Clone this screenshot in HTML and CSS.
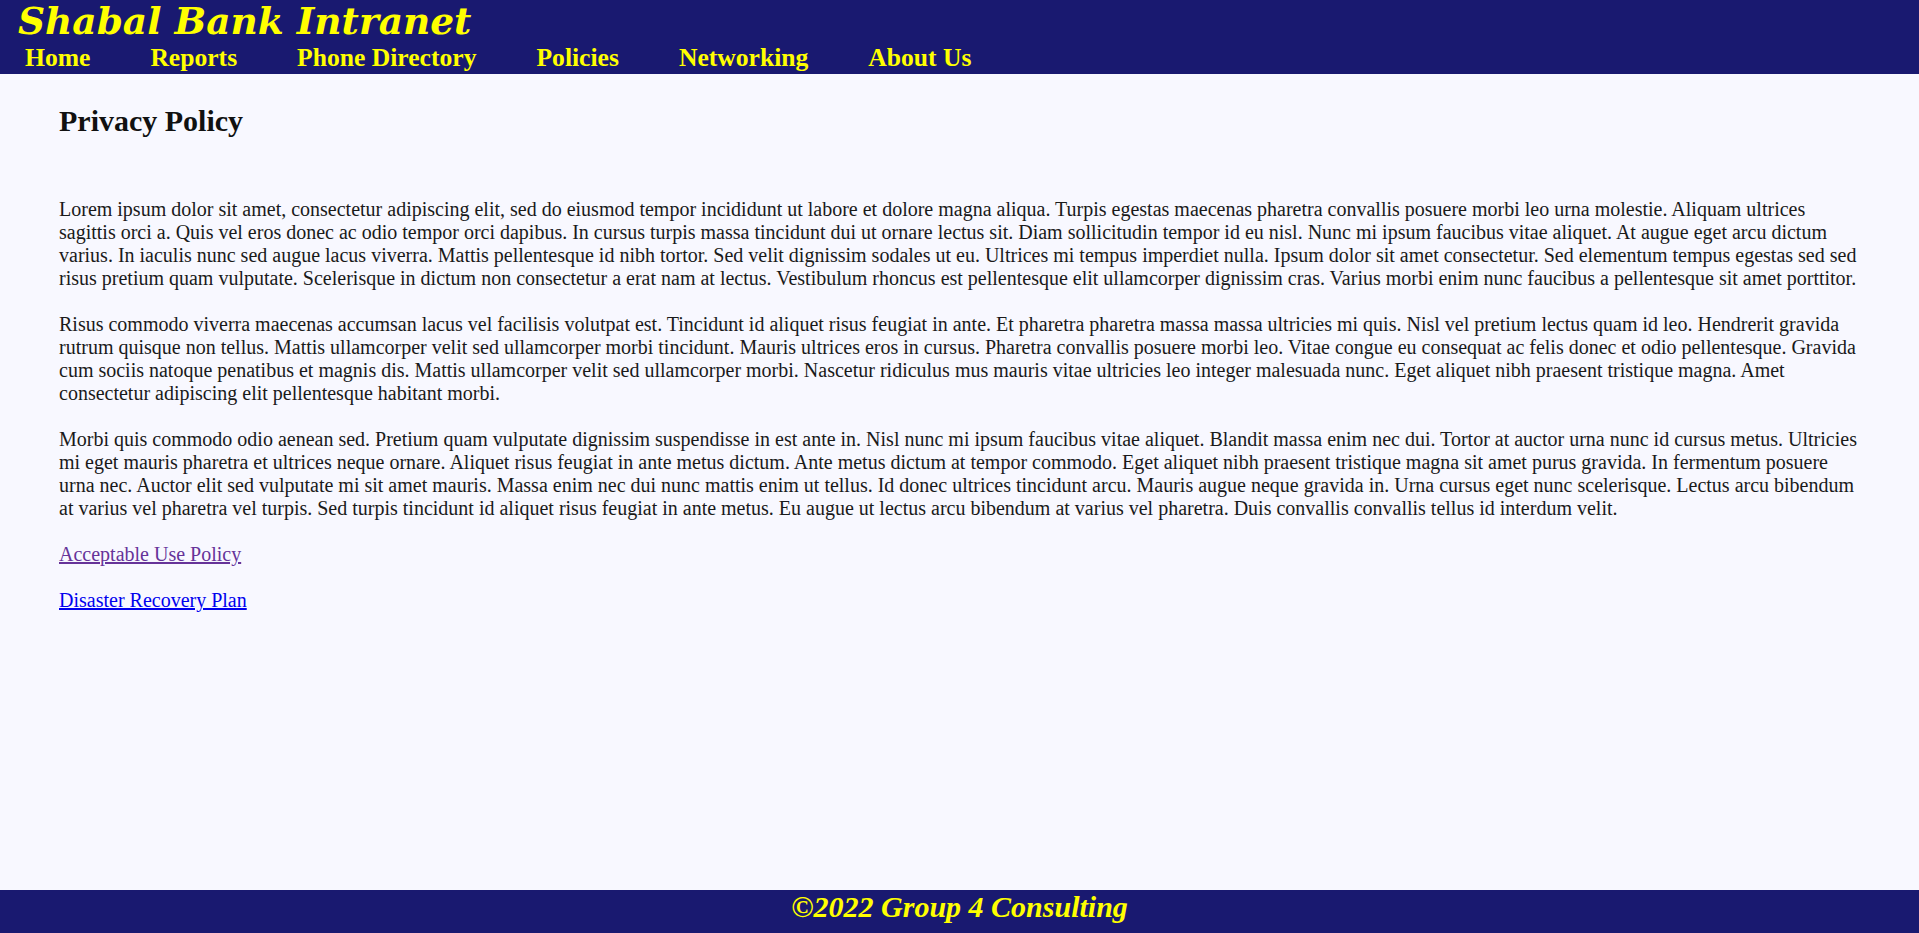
FILE: index.html
```html
<!DOCTYPE html>
<html lang="en">
<head>
<meta charset="utf-8">
<title>Shabal Bank Intranet - Privacy Policy</title>
<link rel="stylesheet" href="styles.css">
</head>
<body>
<div class="page">
  <header class="site-header">
    <div class="site-title">Shabal Bank Intranet</div>
    <nav class="site-nav">
      <a href="#">Home</a>
      <a href="#">Reports</a>
      <a href="#">Phone Directory</a>
      <a href="#">Policies</a>
      <a href="#">Networking</a>
      <a href="#">About Us</a>
    </nav>
  </header>
  <main class="content">
    <h1 class="page-title">Privacy Policy</h1>
    <p class="para">Lorem ipsum dolor sit amet, consectetur adipiscing elit, sed do eiusmod tempor incididunt ut labore et dolore magna aliqua. Turpis egestas maecenas pharetra convallis posuere morbi leo urna molestie. Aliquam ultrices sagittis orci a. Quis vel eros donec ac odio tempor orci dapibus. In cursus turpis massa tincidunt dui ut ornare lectus sit. Diam sollicitudin tempor id eu nisl. Nunc mi ipsum faucibus vitae aliquet. At augue eget arcu dictum varius. In iaculis nunc sed augue lacus viverra. Mattis pellentesque id nibh tortor. Sed velit dignissim sodales ut eu. Ultrices mi tempus imperdiet nulla. Ipsum dolor sit amet consectetur. Sed elementum tempus egestas sed sed risus pretium quam vulputate. Scelerisque in dictum non consectetur a erat nam at lectus. Vestibulum rhoncus est pellentesque elit ullamcorper dignissim cras. Varius morbi enim nunc faucibus a pellentesque sit amet porttitor.</p>
    <p class="para">Risus commodo viverra maecenas accumsan lacus vel facilisis volutpat est. Tincidunt id aliquet risus feugiat in ante. Et pharetra pharetra massa massa ultricies mi quis. Nisl vel pretium lectus quam id leo. Hendrerit gravida rutrum quisque non tellus. Mattis ullamcorper velit sed ullamcorper morbi tincidunt. Mauris ultrices eros in cursus. Pharetra convallis posuere morbi leo. Vitae congue eu consequat ac felis donec et odio pellentesque. Gravida cum sociis natoque penatibus et magnis dis. Mattis ullamcorper velit sed ullamcorper morbi. Nascetur ridiculus mus mauris vitae ultricies leo integer malesuada nunc. Eget aliquet nibh praesent tristique magna. Amet consectetur adipiscing elit pellentesque habitant morbi.</p>
    <p class="para">Morbi quis commodo odio aenean sed. Pretium quam vulputate dignissim suspendisse in est ante in. Nisl nunc mi ipsum faucibus vitae aliquet. Blandit massa enim nec dui. Tortor at auctor urna nunc id cursus metus. Ultricies mi eget mauris pharetra et ultrices neque ornare. Aliquet risus feugiat in ante metus dictum. Ante metus dictum at tempor commodo. Eget aliquet nibh praesent tristique magna sit amet purus gravida. In fermentum posuere urna nec. Auctor elit sed vulputate mi sit amet mauris. Massa enim nec dui nunc mattis enim ut tellus. Id donec ultrices tincidunt arcu. Mauris augue neque gravida in. Urna cursus eget nunc scelerisque. Lectus arcu bibendum at varius vel pharetra vel turpis. Sed turpis tincidunt id aliquet risus feugiat in ante metus. Eu augue ut lectus arcu bibendum at varius vel pharetra. Duis convallis convallis tellus id interdum velit.</p>
    <p class="para"><a class="doc-link visited" href="#">Acceptable Use Policy</a></p>
    <p class="para"><a class="doc-link" href="#">Disaster Recovery Plan</a></p>
  </main>
  <footer class="site-footer">&copy;2022 Group 4 Consulting</footer>
</div>
</body>
</html>
```
FILE: styles.css
```css
html, body {
  margin: 0;
  padding: 0;
  background: #f8f8ff;
}

body {
  font-family: "Liberation Serif", "Times New Roman", serif;
  color: #1a1a1a;
}

.page {
  min-height: 100vh;
  display: flex;
  flex-direction: column;
}

.site-header {
  background: #191970;
  color: #ffff00;
  height: 74px;
}

.site-title {
  font-family: "DejaVu Serif", serif;
  font-weight: bold;
  font-style: italic;
  font-size: 37.5px;
  line-height: 42px;
  height: 42px;
  padding-left: 18px;
  white-space: nowrap;
}

.site-nav {
  display: flex;
  gap: 60px;
  padding-left: 25px;
  height: 32px;
}

.site-nav a {
  color: #ffff00;
  text-decoration: none;
  font-weight: bold;
  font-size: 25.6px;
  line-height: 32px;
  white-space: nowrap;
}

.content {
  flex: 1;
  padding: 30px 59px 0;
}

.page-title {
  margin: 0 0 60px;
  font-size: 30px;
  line-height: 34px;
  font-weight: bold;
  color: #111;
}

.para {
  margin: 0 0 23px;
  font-size: 20px;
  line-height: 23px;
}

.doc-link {
  color: #0000ee;
  text-decoration: underline;
}

.doc-link.visited {
  color: #663399;
}

.site-footer {
  background: #191970;
  color: #ffff00;
  text-align: center;
  font-weight: bold;
  font-style: italic;
  font-size: 30px;
  line-height: 33px;
  height: 33px;
  padding-bottom: 10px;
}
```
